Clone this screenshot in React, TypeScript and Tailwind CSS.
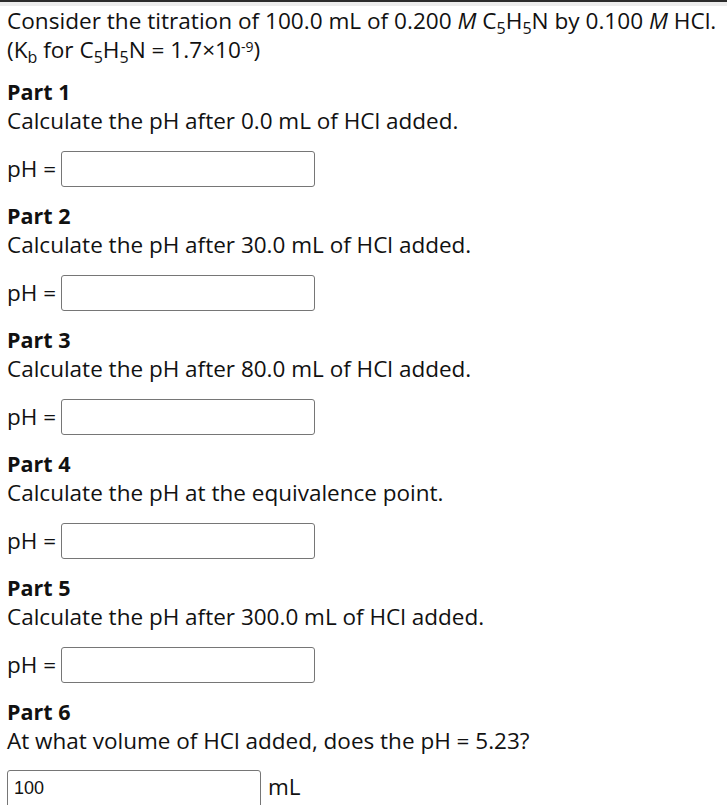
import React from 'react';

const parts = [
  { n: 1, q: 'Calculate the pH after 0.0 mL of HCl added.' },
  { n: 2, q: 'Calculate the pH after 30.0 mL of HCl added.' },
  { n: 3, q: 'Calculate the pH after 80.0 mL of HCl added.' },
  { n: 4, q: 'Calculate the pH at the equivalence point.' },
  { n: 5, q: 'Calculate the pH after 300.0 mL of HCl added.' },
];

const Sub: React.FC<{ children: React.ReactNode }> = ({ children }) => (
  <sub className="text-[16px] relative top-[5px]">{children}</sub>
);

export default function App() {
  return (
    <div className="w-[727px] h-[805px] overflow-hidden bg-white text-[#111] font-['Open_Sans',sans-serif]">
      <div className="h-[2px] bg-[#2b2b2b]" />
      <div className="h-[4px] bg-[#ececec]" />
      {/* header */}
      <div className="pl-[7px] text-[22.6px] leading-[29px]">
        <div className="whitespace-nowrap">
          Consider the titration of 100.0 mL of 0.200 <i>M</i> C<Sub>5</Sub>H<Sub>5</Sub>N by 0.100 <i>M</i> HCl.
        </div>
        <div className="whitespace-nowrap">
          (K<Sub>b</Sub> for C<Sub>5</Sub>H<Sub>5</Sub>N = 1.7×10<sup className="text-[14px] relative -top-[6px]">-9</sup>)
        </div>
      </div>

      <div className="pl-[7px] mt-[13px]">
        {parts.map((p) => (
          <div key={p.n} className="pb-[14px]">
            <div className="text-[21.5px] leading-[29px] font-bold">Part {p.n}</div>
            <div className="text-[22.5px] leading-[30px]">{p.q}</div>
            <div className="mt-[15px] flex items-center h-[36px] gap-[5px]">
              <span className="text-[22.5px] leading-[30px]">pH =</span>
              <div className="w-[254px] h-[36px] border border-[#767676] rounded-[3px] bg-white" />
            </div>
          </div>
        ))}
        <div>
          <div className="text-[21.5px] leading-[29px] font-bold">Part 6</div>
          <div className="text-[22.5px] leading-[30px]">At what volume of HCl added, does the pH = 5.23?</div>
          <div className="mt-[14px] flex items-start gap-[7px]">
            <div className="w-[254px] h-[40px] border border-[#767676] rounded-[3px] bg-white pl-[6px] pt-[6px] text-[18px] leading-[22px] font-['Liberation_Sans',Arial,sans-serif]">
              100
            </div>
            <span className="text-[22.5px] leading-[30px] pt-[2px]">mL</span>
          </div>
        </div>
      </div>
    </div>
  );
}
